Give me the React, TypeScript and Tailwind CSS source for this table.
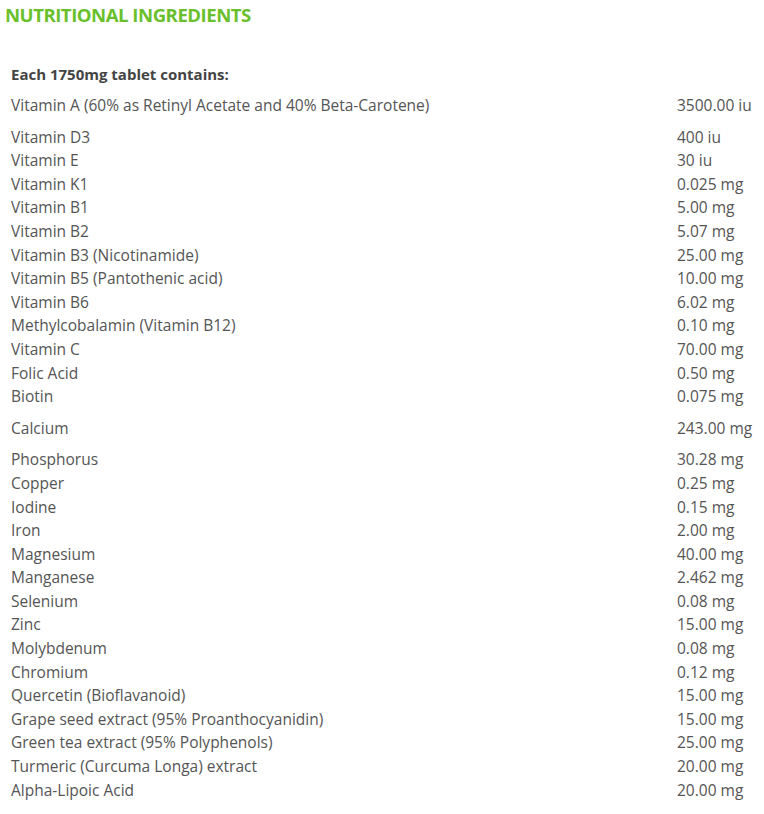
const rows: [string, string, boolean?][] = [
  ["Vitamin A (60% as Retinyl Acetate and 40% Beta-Carotene)", "3500.00 iu", true],
  ["Vitamin D3", "400 iu"],
  ["Vitamin E", "30 iu"],
  ["Vitamin K1", "0.025 mg"],
  ["Vitamin B1", "5.00 mg"],
  ["Vitamin B2", "5.07 mg"],
  ["Vitamin B3 (Nicotinamide)", "25.00 mg"],
  ["Vitamin B5 (Pantothenic acid)", "10.00 mg"],
  ["Vitamin B6", "6.02 mg"],
  ["Methylcobalamin (Vitamin B12)", "0.10 mg"],
  ["Vitamin C", "70.00 mg"],
  ["Folic Acid", "0.50 mg"],
  ["Biotin", "0.075 mg"],
  ["Calcium", "243.00 mg", true],
  ["Phosphorus", "30.28 mg"],
  ["Copper", "0.25 mg"],
  ["Iodine", "0.15 mg"],
  ["Iron", "2.00 mg"],
  ["Magnesium", "40.00 mg"],
  ["Manganese", "2.462 mg"],
  ["Selenium", "0.08 mg"],
  ["Zinc", "15.00 mg"],
  ["Molybdenum", "0.08 mg"],
  ["Chromium", "0.12 mg"],
  ["Quercetin (Bioflavanoid)", "15.00 mg"],
  ["Grape seed extract (95% Proanthocyanidin)", "15.00 mg"],
  ["Green tea extract (95% Polyphenols)", "25.00 mg"],
  ["Turmeric (Curcuma Longa) extract", "20.00 mg"],
  ["Alpha-Lipoic Acid", "20.00 mg"],
];

export default function App() {
  return (
    <div className="min-h-[814px] w-[764px] bg-white font-['Open_Sans',sans-serif] text-[#555]">
      {/* Title */}
      <h2 className="pl-[5px] pt-[3px] text-[18.6px] font-bold uppercase leading-[24px] tracking-[-0.5px] text-[#6abf2c]">
        Nutritional Ingredients
      </h2>

      <div className="px-[11px] pt-[35px]">
        <p className="text-[15px] font-bold leading-[24px] text-[#444]">
          Each 1750mg tablet contains:
        </p>

        <div>
          {rows.map(([name, amount, spaced]) => (
            <div
              key={name}
              className={`flex text-[15.5px] leading-[23.6px] ${spaced ? "py-[8px]" : ""}`}
            >
              <span className="w-[666px] shrink-0">{name}</span>
              <span>{amount}</span>
            </div>
          ))}
        </div>
      </div>
    </div>
  );
}
